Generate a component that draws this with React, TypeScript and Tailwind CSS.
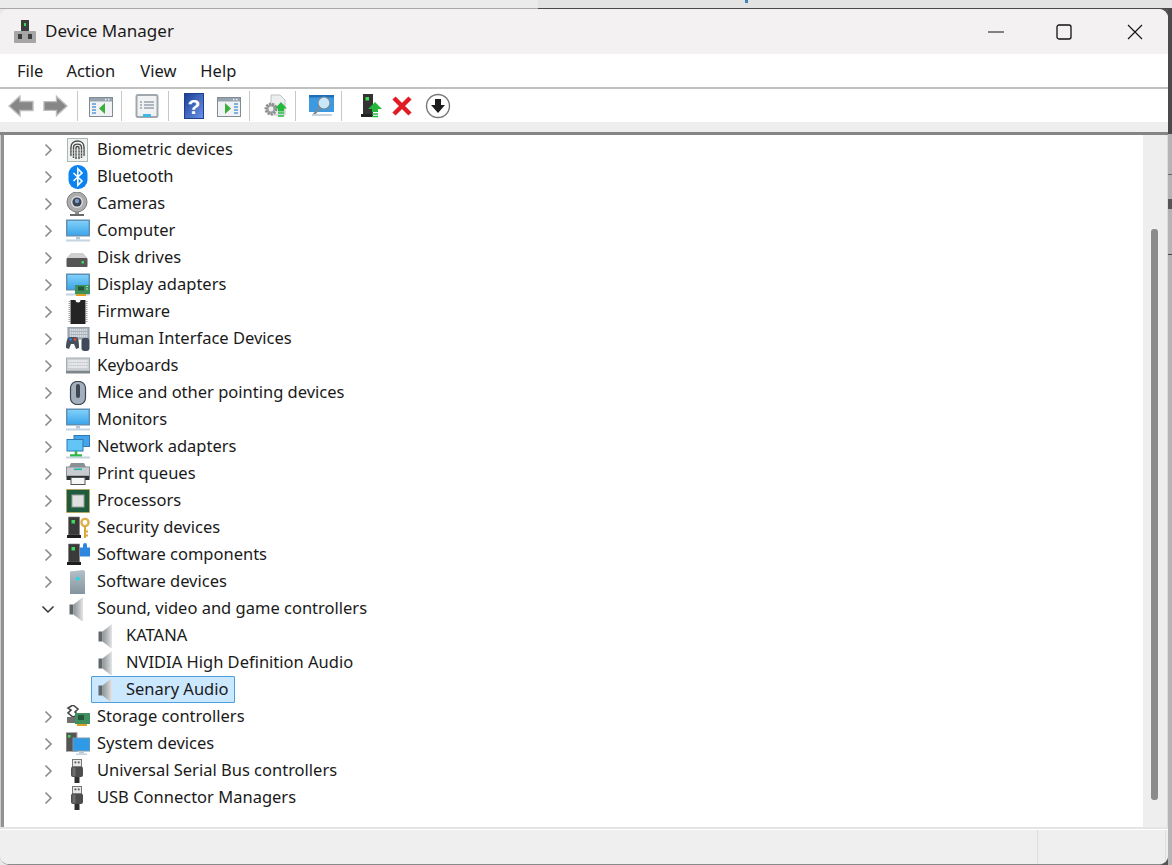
import type { ReactNode } from 'react'

const Svg = ({ children, size = 24 }: { children: ReactNode; size?: number }) => (
  <svg width={size} height={size} viewBox="0 0 24 24" className="shrink-0">
    {children}
  </svg>
)

const Monitor = () => (
  <>
    <defs>
      <linearGradient id="screen" x1="0" y1="0" x2="0" y2="1">
        <stop offset="0" stopColor="#7fd0f8" />
        <stop offset="1" stopColor="#3ea6ec" />
      </linearGradient>
    </defs>
    <rect x="0" y="0.5" width="24" height="17" fill="#5f8fb4" />
    <rect x="1.5" y="2" width="21" height="14" fill="url(#screen)" />
    <rect x="10" y="17.5" width="4" height="3" fill="#b8c8d4" />
    <rect x="0" y="20.5" width="24" height="2" fill="#c4d4e0" />
  </>
)

const Tower = () => (
  <>
    <path d="M2.5 1h11v18h-11z" fill="#3a3a3a" stroke="#777" strokeWidth="0.6" />
    <rect x="5.5" y="4" width="3.5" height="3.5" fill="#3ddc54" />
    <path d="M1 19h14v3H1z" fill="#1e1e1e" />
  </>
)

const Speaker = () => (
  <>
    <defs>
      <linearGradient id="cone" x1="0" y1="0" x2="1" y2="0">
        <stop offset="0" stopColor="#8f9497" />
        <stop offset="0.6" stopColor="#bfc2c4" />
        <stop offset="1" stopColor="#e4e5e6" />
      </linearGradient>
    </defs>
    <path d="M3.5 7.5h4v10h-4z" fill="#5f676b" />
    <path d="M7.5 7.5L17 0v25l-9.5-7.5z" fill="url(#cone)" />
  </>
)

const Usb = () => (
  <g transform="translate(4 0)">
    <rect x="2.5" y="0.5" width="9" height="7.5" fill="#e8e8e8" stroke="#777" strokeWidth="1" />
    <rect x="4.5" y="2.5" width="1.8" height="1.8" fill="#555" />
    <rect x="7.8" y="2.5" width="1.8" height="1.8" fill="#555" />
    <rect x="1" y="7.5" width="12" height="10.5" rx="2" fill="#4d4d4d" />
    <rect x="2.5" y="8.5" width="3" height="8.5" fill="#6d6d6d" />
    <rect x="4.5" y="18" width="5" height="6" fill="#2e2e2e" />
  </g>
)

const Biometric = () => (
  <Svg>
    <rect x="1.5" y="0.5" width="20" height="23" fill="#eef3f0" stroke="#a9bab3" />
    <g fill="none" stroke="#4a4a4a">
      <path d="M5 18V9c0-8 13-8 13 0v9" strokeWidth="1.4" />
      <path d="M7.5 20V9.5c0-4.5 8-4.5 8 0V20" strokeWidth="1.4" />
      <path d="M10 21V10c0-2 3-2 3 0v11" strokeWidth="1.4" />
      <path d="M5 12h13M5 15h13M5 18h13" stroke="#d8d8d8" strokeWidth="0.7" />
    </g>
  </Svg>
)

const Bluetooth = () => (
  <Svg>
    <rect x="2.5" y="0" width="19" height="24" rx="9" fill="#0b84f2" />
    <path d="M7.5 8l8.5 8-4.2 4.3V3.7L16 8l-8.5 8" fill="none" stroke="#fff" strokeWidth="1.6" />
  </Svg>
)

const Camera = () => (
  <Svg>
    <circle cx="11" cy="10" r="10" fill="#adadad" stroke="#7b7b7b" />
    <circle cx="11" cy="10" r="6" fill="#dedede" />
    <circle cx="11" cy="10" r="4.6" fill="#3a4656" />
    <circle cx="11" cy="9" r="2.2" fill="#7a9cc8" />
    <rect x="9" y="20" width="4" height="2" fill="#8a8a8a" />
    <rect x="4" y="22" width="14" height="2" fill="#6a6a6a" />
  </Svg>
)

const Disk = () => (
  <Svg>
    <path d="M5 7h12l4.5 5h-21z" fill="#cfcfcf" />
    <rect x="0.5" y="12" width="21" height="9" rx="1" fill="#555" />
    <rect x="15.5" y="15" width="2.5" height="2.5" fill="#3ddc54" />
  </Svg>
)

const Display = () => (
  <Svg>
    <Monitor />
    <rect x="9" y="12" width="15" height="9" fill="#3f8f5f" />
    <rect x="12" y="13.5" width="6" height="4" fill="#22573a" />
    <path d="M20 13.5h2M20 16h2" stroke="#b8d8c0" strokeWidth="1" />
    <rect x="10" y="21" width="10" height="2" fill="#e0a020" />
  </Svg>
)

const Firmware = () => (
  <Svg>
    <path d="M4.5 0h5a2.5 2.5 0 005 0h5v24h-15z" fill="#242424" />
    <path d="M3.5 1v22M20.5 1v22" stroke="#9a9a9a" strokeWidth="2" strokeDasharray="1 1" />
  </Svg>
)

const Hid = () => (
  <Svg>
    <rect x="2" y="0" width="21" height="12" fill="#aab3bc" stroke="#8a949c" />
    <path d="M4 3h17M4 6h17M4 9h17" stroke="#e6eaee" strokeWidth="1.4" strokeDasharray="1.4 0.6" />
    <path d="M0 21c0-8 2-11 4-11h6c2 0 3 3 3 11l-3 1-2-5H5l-2 5z" fill="#46505c" />
    <circle cx="4.5" cy="12.5" r="1.4" fill="#2f7fe0" />
    <circle cx="9" cy="12.5" r="1.4" fill="#e05030" />
    <rect x="15.5" y="11" width="8" height="13" rx="3" fill="#3e4a5a" />
  </Svg>
)

const Keyboard = () => (
  <Svg>
    <rect x="0.5" y="4" width="23" height="13" fill="#ccd0d4" stroke="#a6acb2" />
    <path d="M2.5 7h19M2.5 10h19M2.5 13h19" stroke="#f6f6f6" strokeWidth="1.7" strokeDasharray="1.3 0.5" />
    <rect x="0" y="17" width="24" height="2.5" fill="#7f868c" />
  </Svg>
)

const Mouse = () => (
  <Svg>
    <rect x="4.5" y="0.5" width="15" height="23" rx="6.5" fill="#a3afbc" stroke="#3e4650" strokeWidth="1.2" />
    <rect x="10" y="3" width="4" height="14" rx="2" fill="#3e4650" />
  </Svg>
)

const Network = () => (
  <Svg>
    <rect x="8" y="0.5" width="15.5" height="11" fill="#46a4e8" stroke="#2c7ab8" />
    <rect x="1" y="4.5" width="16" height="11.5" fill="#63c4f6" stroke="#2c7ab8" />
    <path d="M10 16v4M4 20.5h12" stroke="#2fb84a" strokeWidth="2.5" />
    <rect x="0" y="21.5" width="24" height="2" fill="#c4d4e0" />
  </Svg>
)

const Printer = () => (
  <Svg>
    <path d="M5 1h13l2 4H3z" fill="#8a8f94" />
    <rect x="0.5" y="5" width="23" height="9" fill="#c8ccd0" stroke="#8a8f94" />
    <rect x="8" y="6.5" width="8" height="1.6" fill="#22b8a8" />
    <rect x="0.5" y="14" width="23" height="4" fill="#2c3136" />
    <rect x="5" y="15.5" width="14" height="7" fill="#f6f6f6" stroke="#555" />
  </Svg>
)

const Processor = () => (
  <Svg>
    <rect x="0.5" y="0.5" width="23" height="23" fill="#1f5b3e" stroke="#d0a030" strokeDasharray="1 1" />
    <rect x="1.5" y="1.5" width="21" height="21" fill="#1f5b3e" />
    <rect x="6" y="6" width="12" height="12" fill="#dde0dd" stroke="#9aa09c" />
  </Svg>
)

const Security = () => (
  <Svg>
    <Tower />
    <circle cx="19" cy="6.5" r="3.6" fill="none" stroke="#e0b050" strokeWidth="2.4" />
    <path d="M19 10v12M19 15.5h3M19 19.5h3" stroke="#d8a838" strokeWidth="2" />
  </Svg>
)

const SoftwareComponents = () => (
  <Svg>
    <Tower />
    <path d="M14 4.5h3V2a2 2 0 014 0v2.5h3v9H14z" fill="#2e86de" />
  </Svg>
)

const SoftwareDevices = () => (
  <Svg>
    <defs>
      <linearGradient id="softdev" x1="0" y1="0" x2="0" y2="1">
        <stop offset="0" stopColor="#b4c0c8" />
        <stop offset="1" stopColor="#84959f" />
      </linearGradient>
    </defs>
    <path d="M4 1.5l13-1.5 2 1v23H4z" fill="url(#softdev)" />
    <rect x="10" y="7" width="3.5" height="3.5" fill="#2fd4e0" />
  </Svg>
)

const Storage = () => (
  <Svg>
    <path d="M7 0l5 4-3 3 3 3-5 2-5-4 3-3-3-2z" fill="none" stroke="#444" strokeWidth="1.6" />
    <rect x="1" y="12" width="12" height="6" fill="#6f6f6f" />
    <rect x="9" y="8" width="15" height="11" fill="#3f8f5f" />
    <rect x="12" y="10" width="6" height="5" fill="#22573a" />
    <rect x="11" y="19" width="10" height="2" fill="#e0a020" />
  </Svg>
)

const SystemDevices = () => (
  <Svg>
    <rect x="0" y="0.5" width="11" height="19" fill="#555" stroke="#b0b0b0" />
    <rect x="2" y="3" width="2.5" height="2.5" fill="#3ddc54" />
    <rect x="7" y="6" width="17" height="13" fill="#2f9be8" stroke="#7e98ac" />
    <rect x="13" y="19" width="5" height="2.5" fill="#b8c8d4" />
    <rect x="10" y="21.5" width="11" height="1.5" fill="#c4d4e0" />
  </Svg>
)

const Chevron = ({ open }: { open?: boolean }) => (
  <svg width="14" height="14" viewBox="0 0 14 14" className="shrink-0">
    {open ? (
      <path d="M1.5 4.5L7 10l5.5-5.5" fill="none" stroke="#333" strokeWidth="1.5" />
    ) : (
      <path d="M4.5 1.5L10 7l-5.5 5.5" fill="none" stroke="#8a8a8a" strokeWidth="1.6" />
    )}
  </svg>
)

const topRows: { label: string; icon: ReactNode }[] = [
  { label: 'Biometric devices', icon: <Biometric /> },
  { label: 'Bluetooth', icon: <Bluetooth /> },
  { label: 'Cameras', icon: <Camera /> },
  { label: 'Computer', icon: <Svg><Monitor /></Svg> },
  { label: 'Disk drives', icon: <Disk /> },
  { label: 'Display adapters', icon: <Display /> },
  { label: 'Firmware', icon: <Firmware /> },
  { label: 'Human Interface Devices', icon: <Hid /> },
  { label: 'Keyboards', icon: <Keyboard /> },
  { label: 'Mice and other pointing devices', icon: <Mouse /> },
  { label: 'Monitors', icon: <Svg><Monitor /></Svg> },
  { label: 'Network adapters', icon: <Network /> },
  { label: 'Print queues', icon: <Printer /> },
  { label: 'Processors', icon: <Processor /> },
  { label: 'Security devices', icon: <Security /> },
  { label: 'Software components', icon: <SoftwareComponents /> },
  { label: 'Software devices', icon: <SoftwareDevices /> },
]

const bottomRows: { label: string; icon: ReactNode }[] = [
  { label: 'Storage controllers', icon: <Storage /> },
  { label: 'System devices', icon: <SystemDevices /> },
  { label: 'Universal Serial Bus controllers', icon: <Svg><Usb /></Svg> },
  { label: 'USB Connector Managers', icon: <Svg><Usb /></Svg> },
]

function Row({ label, icon, open }: { label: string; icon: ReactNode; open?: boolean }) {
  return (
    <div className="flex h-[27px] items-center pl-[37px]">
      <Chevron open={open} />
      <div className="ml-[11px] flex w-[24px] justify-center">{icon}</div>
      <span className="ml-[7px] whitespace-nowrap pb-[2px]">{label}</span>
    </div>
  )
}

function Child({ label, selected }: { label: string; selected?: boolean }) {
  return (
    <div className="flex h-[27px] items-center pl-[87px]">
      <div
        className={
          selected
            ? 'flex h-[27px] w-[144px] items-center rounded-[1px] border border-[#4a9fe0] bg-[#cce8ff] pl-[3px]'
            : 'flex h-[27px] items-center border border-transparent pl-[3px]'
        }
      >
        <Svg><Speaker /></Svg>
        <span className="ml-[7px] whitespace-nowrap pb-[2px]">{label}</span>
      </div>
    </div>
  )
}

const Sep = ({ ml }: { ml: string }) => <div className={`${ml} h-[30px] w-px shrink-0 bg-[#c8c8c8]`} />

const ToolPage = ({ accent }: { accent: 'left' | 'right' }) => (
  <Svg>
    <rect x="0.5" y="3.5" width="23" height="19" fill="#f0f2f4" stroke="#7f8c96" />
    <rect x="1" y="4" width="22" height="3.5" fill="#98a4ad" />
    <path d="M16 5.5h1.5M19 5.5h1.5" stroke="#eef" strokeWidth="1.4" />
    {accent === 'left' ? (
      <>
        <path d="M3 10h4M3 13h4M3 16h4M3 19h4" stroke="#5a9ad8" strokeWidth="1.4" />
        <path d="M16 9v11l-6-5.5z" fill="#3cae3c" />
      </>
    ) : (
      <>
        <path d="M17 10h4M17 13h4M17 16h4M17 19h4" stroke="#5a9ad8" strokeWidth="1.4" />
        <path d="M8 9v11l6-5.5z" fill="#3cae3c" />
      </>
    )}
  </Svg>
)

function Toolbar() {
  return (
    <div className="flex h-[33px] shrink-0 items-center bg-white pl-[8px]">
      <svg width="26" height="24" viewBox="0 0 26 24" className="shrink-0">
        <path d="M1 12L12 2v5.5h13v9H12V22z" fill="#878787" stroke="#bdbdbd" strokeWidth="1.4" />
      </svg>
      <svg width="25" height="24" viewBox="0 0 26 24" className="ml-[9px] shrink-0">
        <path d="M25 12L14 2v5.5H1v9h13V22z" fill="#878787" stroke="#bdbdbd" strokeWidth="1.4" />
      </svg>
      <Sep ml="ml-[9px]" />
      <div className="ml-[11px]">
        <ToolPage accent="left" />
      </div>
      <Sep ml="ml-[8px]" />
      <div className="ml-[13px]">
        <Svg>
          <rect x="1.5" y="1" width="21" height="22" rx="1.5" fill="#f0f2f4" stroke="#a0a8ae" strokeWidth="2" />
          <path d="M5 8h2M9 8h10M5 11h2M9 11h10M5 14h2M9 14h10" stroke="#6a7a8a" strokeWidth="1.2" />
          <rect x="8" y="20" width="8" height="3" fill="#3cb8e8" />
        </Svg>
      </div>
      <Sep ml="ml-[9px]" />
      <div className="ml-[15px]">
        <svg width="20" height="26" viewBox="0 0 20 26" className="shrink-0">
          <defs>
            <linearGradient id="help" x1="0" y1="0" x2="1" y2="1">
              <stop offset="0" stopColor="#1c3f96" />
              <stop offset="1" stopColor="#6b93e6" />
            </linearGradient>
          </defs>
          <rect x="0" y="0" width="20" height="26" fill="#1f3f8f" />
          <rect x="1" y="1" width="18" height="24" fill="url(#help)" />
          <text x="10" y="20.5" textAnchor="middle" fontSize="21" fontWeight="700" fill="#fff" fontFamily="Liberation Sans, sans-serif">
            ?
          </text>
        </svg>
      </div>
      <div className="ml-[13px]">
        <ToolPage accent="right" />
      </div>
      <Sep ml="ml-[8px]" />
      <div className="ml-[13px]">
        <Svg>
          <path d="M8 1h9l5 5v15H8z" fill="#eceef0" stroke="#bcc0c4" />
          <circle cx="8" cy="15" r="5" fill="#a4a8ac" stroke="#8e8e8e" strokeWidth="3" strokeDasharray="2 1" />
          <circle cx="8" cy="15" r="2.4" fill="#eee" />
          <path d="M18 8l6 6.5h-3v3h-6v-3h-3z" fill="#26b83c" />
          <path d="M15 19h6M15 22h6" stroke="#26b83c" strokeWidth="1.6" />
        </Svg>
      </div>
      <Sep ml="ml-[8px]" />
      <div className="ml-[13px]">
        <svg width="26" height="24" viewBox="0 0 26 24" className="shrink-0">
          <rect x="0" y="1" width="25" height="17" fill="#3c9be0" />
          <rect x="0" y="1" width="25" height="2.5" fill="#1f6fb8" />
          <circle cx="15" cy="9" r="6" fill="#c8e8fa" stroke="#7a8a96" strokeWidth="1.2" />
          <path d="M11 13.5l-7 8" stroke="#7a8a96" strokeWidth="2.2" />
          <rect x="3" y="20" width="20" height="2" fill="#c4d4e0" />
        </svg>
      </div>
      <Sep ml="ml-[6px]" />
      <div className="ml-[18px]">
        <Svg>
          <path d="M3 0h10v20H3z" fill="#333" />
          <rect x="5.5" y="3" width="3.5" height="3.5" fill="#3ddc54" />
          <path d="M1 20h12v3H1z" fill="#222" />
          <path d="M15 8l7 7h-4v3h-6v-3H8z" fill="#26b83c" />
          <path d="M12 20h6M12 22.5h6" stroke="#26b83c" strokeWidth="1.5" />
        </Svg>
      </div>
      <div className="ml-[7px]">
        <svg width="22" height="22" viewBox="0 0 22 22" className="shrink-0">
          <path d="M3 3l16 16M19 3L3 19" stroke="#e01b24" strokeWidth="4.5" />
        </svg>
      </div>
      <div className="ml-[12px]">
        <svg width="26" height="26" viewBox="0 0 26 26" className="shrink-0">
          <circle cx="13" cy="13" r="11.5" fill="#fff" stroke="#777" strokeWidth="1.4" />
          <path d="M10 6h6v6h4l-7 8-7-8h4z" fill="#1c1c1c" />
        </svg>
      </div>
    </div>
  )
}

export default function App() {
  return (
    <div
      className="flex h-[865px] w-[1172px] flex-col overflow-hidden bg-[#e9e9e9] text-[16.5px] leading-[27px] text-[#1a1a1a]"
      style={{ fontFamily: '"Noto Sans", sans-serif' }}
    >
      <div className="flex h-[9px] shrink-0">
        <div className="w-[538px] border-b border-[#a8a8a8] bg-[#ebebeb]" />
        <div className="flex flex-1 border-b border-[#4a4a4a] bg-[#e3e3e3]">
          <div className="ml-[207px] h-[3px] w-[3px] bg-[#3f7fc0]" />
        </div>
      </div>
      <div className="flex min-h-0 flex-1 bg-[linear-gradient(to_right,#e9e9e9_50%,#555_50%)]">
        <div className="flex w-[1168px] flex-col overflow-hidden rounded-[9px] border-b border-[#8a8a8a] bg-[#f0f0f0]">
          <div className="flex h-[45px] shrink-0 items-center bg-[#f3f1f2] pl-[14px]">
            <svg width="22" height="24" viewBox="0 0 22 24" className="shrink-0">
              <rect x="7" y="0" width="8" height="12" fill="#3c3c3c" />
              <rect x="10" y="3" width="2" height="3" fill="#3ddc54" />
              <rect x="0" y="11" width="22" height="12" rx="1" fill="#a6a6a6" />
              <rect x="4" y="14" width="4" height="5" fill="#3c3c3c" />
              <rect x="14" y="14" width="4" height="5" fill="#3c3c3c" />
            </svg>
            <span className="ml-[9px] pb-[2px] text-[17px]">Device Manager</span>
            <div className="ml-auto flex items-center">
              <svg width="16" height="16" viewBox="0 0 16 16" className="shrink-0">
                <path d="M0 8h16" stroke="#111" strokeWidth="1" />
              </svg>
              <svg width="16" height="16" viewBox="0 0 16 16" className="ml-[52px] shrink-0">
                <rect x="1" y="1" width="14" height="14" rx="2" fill="none" stroke="#111" strokeWidth="1.3" />
              </svg>
              <svg width="16" height="16" viewBox="0 0 16 16" className="ml-[55px] mr-[25px] shrink-0">
                <path d="M1 1l14 14M15 1L1 15" stroke="#111" strokeWidth="1.1" />
              </svg>
            </div>
          </div>
          <div className="flex h-[33px] shrink-0 items-center bg-white pl-[17px]">
            <span>File</span>
            <span className="ml-[23px]">Action</span>
            <span className="ml-[25px]">View</span>
            <span className="ml-[24px]">Help</span>
          </div>
          <div className="h-[2px] shrink-0 bg-[#c0c0c0]" />
          <Toolbar />
          <div className="h-[10px] shrink-0 bg-[#eeeeee]" />
          <div className="h-[3px] shrink-0 bg-[#858585]" />
          <div className="flex min-h-0 flex-1 border-r border-[#dcdcdc] bg-[#eeeeee]">
            <div className="w-[4px] shrink-0 border-l border-[#cccccc] bg-[#929292]" />
            <div className="min-w-0 flex-1 bg-white pt-[1px]">
              {topRows.map(r => (
                <Row key={r.label} label={r.label} icon={r.icon} />
              ))}
              <Row label="Sound, video and game controllers" icon={<Svg><Speaker /></Svg>} open />
              <Child label="KATANA" />
              <Child label="NVIDIA High Definition Audio" />
              <Child label="Senary Audio" selected />
              {bottomRows.map(r => (
                <Row key={r.label} label={r.label} icon={r.icon} />
              ))}
            </div>
            <div className="flex w-[24px] shrink-0 flex-col pl-[8px] pt-[94px]">
              <div className="h-[571px] w-[7px] rounded-[3px] bg-[#8b8b8b]" />
            </div>
          </div>
          <div className="h-[2px] shrink-0 bg-[#e4e4e4]" />
          <div className="h-px shrink-0 bg-white" />
          <div className="flex h-[34px] shrink-0 bg-[#efefef]">
            <div className="w-[1038px] border-r border-[#dedede]" />
            <div className="w-[128px] border-r border-[#dedede]" />
          </div>
        </div>
        <div className="flex w-[4px] flex-col">
          <div className="h-[125px] bg-[#4a4a4a]" />
          <div className="h-[40px] bg-[#b4b4b4]" />
          <div className="h-px bg-[#666]" />
          <div className="h-[24px] bg-[#b4b4b4]" />
          <div className="h-[10px] bg-[#555]" />
          <div className="h-[45px] bg-[#b4b4b4]" />
          <div className="h-px bg-[#444]" />
          <div className="flex-1 bg-[#b4b4b4]" />
        </div>
      </div>
    </div>
  )
}
